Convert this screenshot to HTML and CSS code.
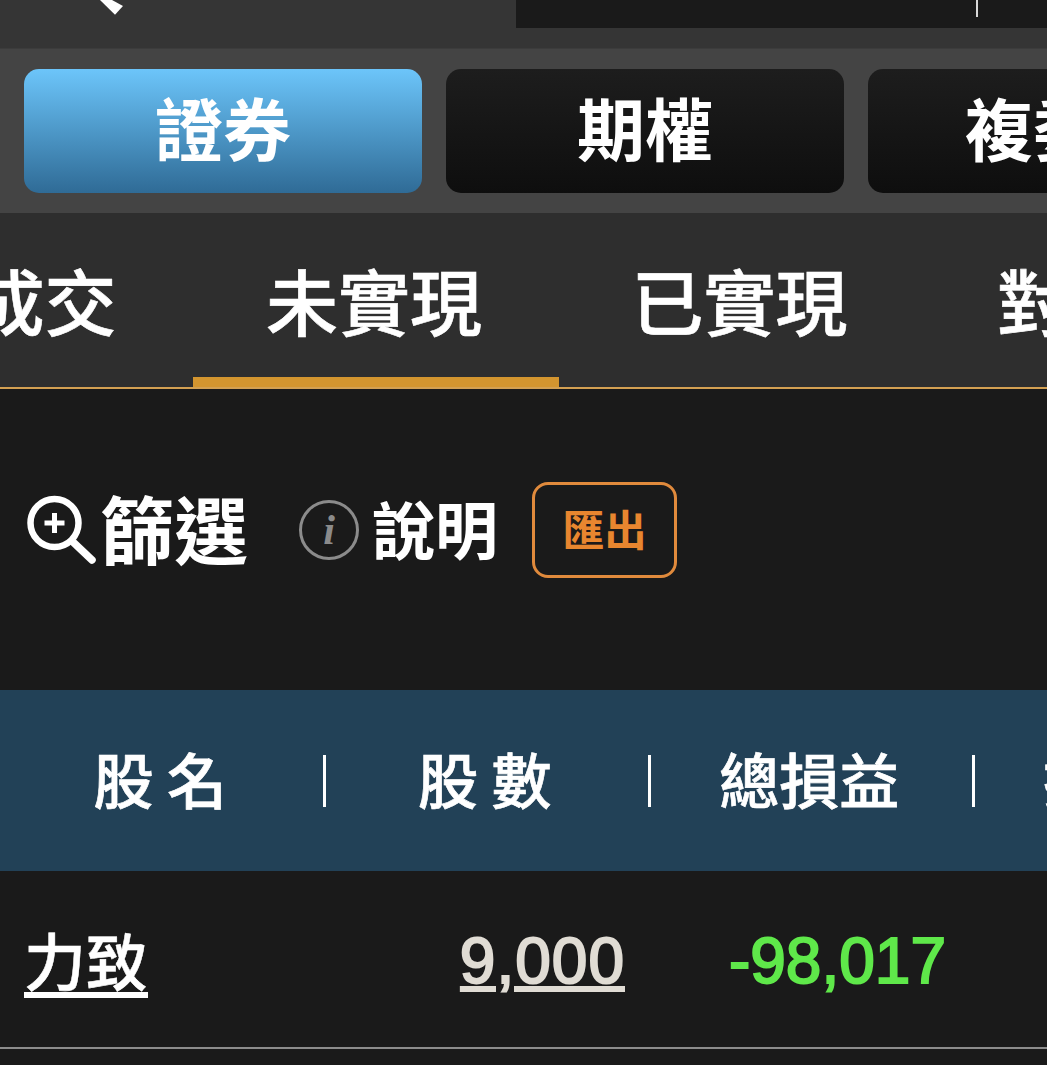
FILE: index.html
```html
<!DOCTYPE html>
<html lang="zh-Hant">
<head>
<meta charset="utf-8">
<title>未實現</title>
<link rel="stylesheet" href="styles.css">
</head>
<body>
<div class="screen">
  <header class="topbar">
    <svg class="back" width="140" height="20" viewBox="0 0 140 20"><polygon points="100,0 112,0 123,6 115,14.7" fill="#fff"/></svg>
    <div class="search"><span class="search-rule"></span></div>
  </header>
  <nav class="market">
    <button class="market-btn is-on">證券</button>
    <button class="market-btn">期權</button>
    <button class="market-btn">複委託</button>
  </nav>
  <nav class="subtabs">
    <a class="subtab subtab-first">成交</a>
    <a class="subtab is-active">未實現</a>
    <a class="subtab">已實現</a>
    <a class="subtab">對帳單</a>
  </nav>
  <section class="tools">
    <a class="tool-filter">
      <svg class="icon-zoom" width="70" height="72" viewBox="0 0 70 72" fill="none" stroke="#fff">
        <circle cx="27.5" cy="29" r="24" stroke-width="6.5"/>
        <path d="M17.5 29h20M27.5 19v20" stroke-width="5"/>
        <path d="M46 48l19 18" stroke-width="7.5" stroke-linecap="round"/>
      </svg>
      <span class="tool-label">篩選</span>
    </a>
    <a class="tool-help">
      <svg class="icon-info" width="62" height="62" viewBox="0 0 62 62" fill="none">
        <circle cx="31" cy="31" r="28.5" stroke="#8b8b8b" stroke-width="3"/>
        <text x="31" y="45" text-anchor="middle" class="info-i">i</text>
      </svg>
      <span class="tool-label">說明</span>
    </a>
    <button class="export">匯出</button>
  </section>
  <div class="thead">
    <div class="th">股 名</div>
    <div class="th">股 數</div>
    <div class="th">總損益</div>
    <div class="th th-last">投資成本</div>
  </div>
  <div class="row">
    <div class="cell"><a class="name">力致</a></div>
    <div class="cell cell-qty"><a class="qty">9,000</a></div>
    <div class="cell cell-pl">-98,017</div>
  </div>
</div>
</body>
</html>
```
FILE: styles.css
```css
* { box-sizing: border-box; }
html, body { margin: 0; padding: 0; background: #1a1a1a; }
body { font-family: "Noto Sans CJK TC", "Liberation Sans", sans-serif; color: #fff; }
.screen { width: 1047px; height: 1065px; overflow: hidden; display: flex; flex-direction: column; }

.topbar { height: 49px; flex: none; background: #353535; display: flex; align-items: flex-start; justify-content: space-between; border-bottom: 1px solid #3c3c3c; }
.back { display: block; flex: none; }
.search { width: 531px; height: 28px; background: #1a1a1a; padding-left: 460px; }
.search-rule { display: block; width: 2px; height: 17px; background: #d8d8d8; }

.market { height: 164px; flex: none; background: #444; display: flex; gap: 24px; padding: 20px 0 20px 24px; overflow: hidden; }
.market-btn { width: 398px; height: 124px; flex: none; border: 0; border-radius: 15px; color: #fff; font-family: inherit; font-size: 68px; font-weight: 700; line-height: 116px; padding: 0 0 8px; white-space: nowrap; background: linear-gradient(#1d1d1d, #0e0e0e); }
.market-btn.is-on { background: linear-gradient(#6cc5fa, #2f6b96); }

.subtabs { height: 176px; flex: none; background: #2e2e2e; border-bottom: 2px solid #d3a052; display: flex; overflow: hidden; }
.subtab { flex: none; height: 174px; padding: 0 76.5px 0 73px; font-size: 72px; font-weight: 500; line-height: 171px; color: #fff; white-space: nowrap; -webkit-text-stroke: 0.6px #fff; }
.subtab-first { margin-left: -100.5px; }
.subtab.is-active { border-bottom: 10px solid #d3952f; }

.tools { height: 301px; flex: none; background: #1a1a1a; display: flex; align-items: center; padding: 0 0 20px 27px; }
.tool-filter { display: flex; align-items: center; gap: 3px; font-size: 74px; font-weight: 700; line-height: 1; margin-right: 50px; }
.tool-help { display: flex; align-items: center; gap: 12px; font-size: 63px; font-weight: 700; line-height: 1; margin-right: 34px; }
.tool-label { padding-bottom: 6px; }
.icon-zoom, .icon-info { flex: none; display: block; }
.info-i { font-family: "Liberation Serif", serif; font-style: italic; font-weight: 700; font-size: 42px; fill: #8b8b8b; }
.export { width: 145px; height: 96px; flex: none; padding: 0 0 3px; background: transparent; border: 3px solid #e08a3c; border-radius: 16px; color: #e8862f; font-family: inherit; font-size: 42px; font-weight: 700; line-height: 1; }

.thead { height: 181px; flex: none; background: #224157; display: flex; align-items: center; overflow: hidden; padding-left: 1.5px; }
.th { width: 324.5px; height: 52px; flex: none; border-right: 3px solid #fff; font-size: 60px; font-weight: 500; line-height: 46px; text-align: center; white-space: nowrap; padding-right: 4px; -webkit-text-stroke: 0.7px #fff; }
.th-last { border-right: 0; padding: 0 0 0 68px; text-align: left; }

.row { height: 178px; flex: none; background: #1a1a1a; border-bottom: 2px solid #8c8c8c; display: flex; align-items: center; }
.cell { width: 324px; flex: none; }
.name { display: inline-block; margin-left: 24px; font-size: 62px; font-weight: 500; line-height: 1; color: #fff; text-decoration: underline; text-decoration-thickness: 6px; text-underline-offset: 6px; -webkit-text-stroke: 0.5px #fff; }
.cell-qty, .cell-pl { font-family: "Liberation Sans", sans-serif; font-size: 64px; line-height: 1; text-align: right; padding-top: 4px; -webkit-text-stroke: 2px currentColor; }
.cell-qty { padding-right: 23px; color: #e0dcd4; }
.qty { letter-spacing: 1px; text-decoration: underline; text-decoration-thickness: 6px; text-underline-offset: 3px; }
.cell-pl { padding-right: 26px; color: #5fe84a; }
```
